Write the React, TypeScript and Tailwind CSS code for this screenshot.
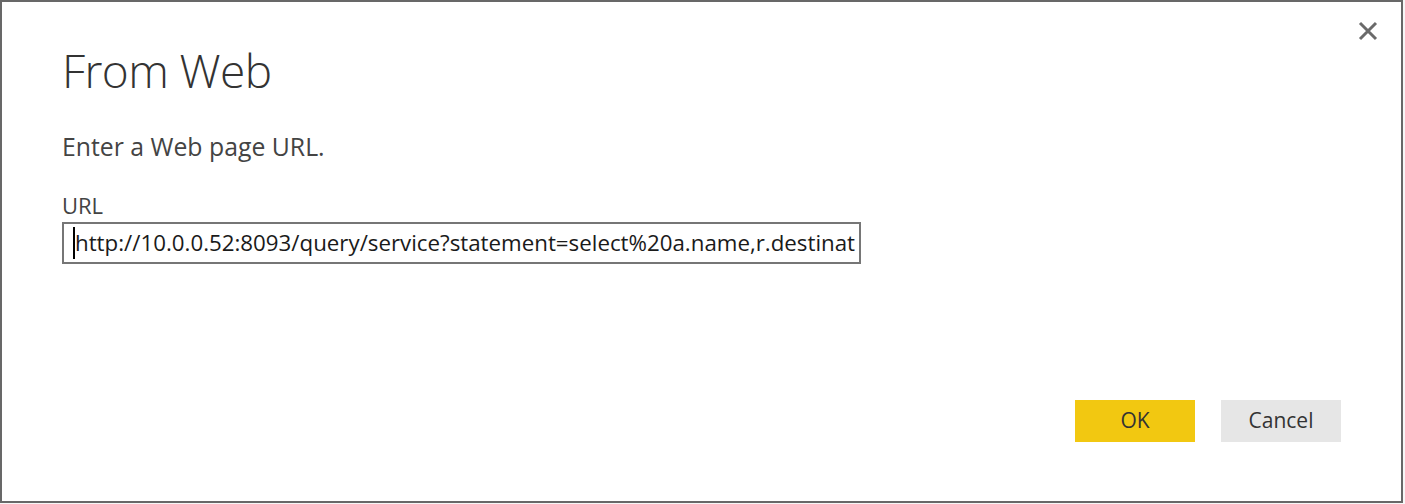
import React from "react";

export default function App() {
  return (
    <div className="w-[1405px] h-[504px] bg-[#f7f7f7]" style={{ fontFamily: '"Open Sans", "Noto Sans", sans-serif' }}>
      <div className="relative w-[1403px] h-[503px] bg-white border-2 border-[#686868] flex flex-col pl-[60px]">
        <button className="absolute right-[22px] top-[18px] w-[22px] h-[22px] flex items-center justify-center">
          <svg width="20" height="20" viewBox="0 0 20 20">
            <path d="M2 2 L18 18 M18 2 L2 18" stroke="#6a6a6a" strokeWidth="3" />
          </svg>
        </button>
        <h1 className="mt-[38px] h-[60px] text-[46px] leading-[60px] font-light text-[#333333] tracking-[-0.6px]">From Web</h1>
        <p className="mt-[31px] h-[30px] text-[24.8px] leading-[30px] text-[#444444] tracking-[0px]">Enter a Web page URL.</p>
        <label className="mt-[30px] h-[28px] text-[22px] leading-[28px] text-[#444444]">URL</label>
        <div className="mt-[3px] w-[799px] h-[42px] border-2 border-[#767676] flex items-center pl-[9px] overflow-hidden">
          <span className="shrink-0 w-[2px] h-[32px] bg-black"></span>
          <span className="shrink-0 text-[22.3px] leading-[38px] text-[#1a1a1a] whitespace-nowrap tracking-[0px]">http://10.0.0.52:8093/query/service?statement=select%20a.name,r.destinat</span>
        </div>
        <div className="flex-1"></div>
        <div className="flex justify-end gap-[26px] pr-[60px] mb-[59px]">
          <button className="w-[120px] h-[42px] bg-[#f2c811] text-[21px] text-[#333333] flex items-center justify-center">OK</button>
          <button className="w-[120px] h-[42px] bg-[#e6e6e6] text-[21px] text-[#333333] flex items-center justify-center">Cancel</button>
        </div>
      </div>
    </div>
  );
}
